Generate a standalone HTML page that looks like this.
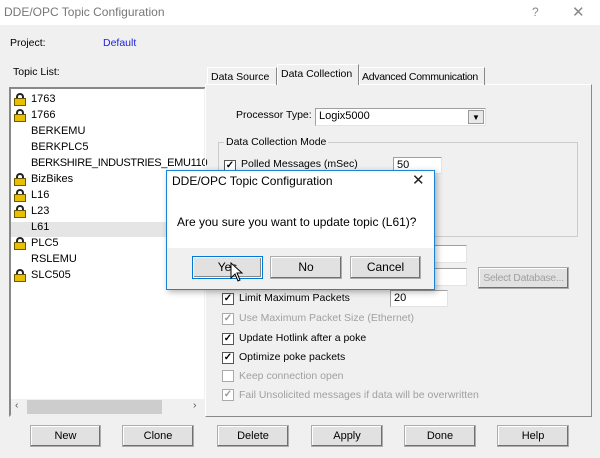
<!DOCTYPE html>
<html><head><style>
*{box-sizing:border-box;margin:0;padding:0}
body{width:600px;height:458px;background:#f0f0f0;font-family:"Liberation Sans",sans-serif;font-size:10.5px;color:#000;position:relative;overflow:hidden}
.a{position:absolute;white-space:nowrap}
.btn{position:absolute;background:#e1e1e1;border:1px solid #adadad;box-shadow:inset -1px -1px 0 #707070,inset 1px 1px 0 #fff;text-align:center;font-size:11px;white-space:nowrap}
.tb{position:absolute;background:#fff;border:1px solid #a0a0a0;border-right-color:#e3e3e3;border-bottom-color:#e3e3e3;font-size:11px;padding:1px 3px}
.cb{position:absolute;width:12px;height:12px;border:1px solid #555;background:#fff;font-size:10px;line-height:10px;text-align:center;font-weight:bold}
.cb.d{border-color:#aaa;color:#999}
.g{color:#a0a0a0}
.lock{position:absolute;left:14px;width:12px;height:13px}
.lock:before{content:"";position:absolute;left:2px;top:0;width:8px;height:7px;border:2px solid #222;border-bottom:none;border-radius:4px 4px 0 0;box-sizing:border-box}
.lock:after{content:"";position:absolute;left:0;top:5px;width:12px;height:8px;background:#e8c000;border:1px solid #6b5800;box-sizing:border-box}
.it{position:absolute;left:31px;font-size:11px;white-space:nowrap}
</style></head><body>
<div class="a" style="left:0;top:0;width:600px;height:25px;background:#fff"></div>
<div class="a" style="left:4px;top:5px;font-size:12px;color:#777">DDE/OPC Topic Configuration</div>
<div class="a" style="left:532px;top:5px;font-size:12px;color:#888">?</div>
<div class="a" style="left:572px;top:3px;font-size:15px;color:#888">✕</div>

<div class="a" style="left:10px;top:37px">Project:</div>
<div class="a" style="left:103px;top:37px;color:#2222dd">Default</div>
<div class="a" style="left:13px;top:66px">Topic List:</div>

<div class="a" style="left:9px;top:87px;width:197px;height:330px;background:#fff;border:2px solid #888;border-right-color:#f0f0f0;border-bottom-color:#f0f0f0"></div>
<div class="a" style="left:11px;top:222px;width:194px;height:15px;background:#e5e5e5"></div>
<div class="lock" style="top:93px"></div><div class="it" style="top:93px">1763</div>
<div class="lock" style="top:109px"></div><div class="it" style="top:109px">1766</div>
<div class="it" style="top:125px">BERKEMU</div>
<div class="it" style="top:141px">BERKPLC5</div>
<div class="it" style="top:157px;letter-spacing:-0.3px">BERKSHIRE_INDUSTRIES_EMU110</div>
<div class="lock" style="top:173px"></div><div class="it" style="top:173px">BizBikes</div>
<div class="lock" style="top:189px"></div><div class="it" style="top:189px">L16</div>
<div class="lock" style="top:205px"></div><div class="it" style="top:205px">L23</div>
<div class="it" style="top:221px">L61</div>
<div class="lock" style="top:237px"></div><div class="it" style="top:237px">PLC5</div>
<div class="it" style="top:253px">RSLEMU</div>
<div class="lock" style="top:269px"></div><div class="it" style="top:269px">SLC505</div>
<div class="a" style="left:11px;top:399px;width:194px;height:16px;background:#f0f0f0"></div>
<div class="a" style="left:27px;top:400px;width:135px;height:14px;background:#cdcdcd"></div>
<div class="a" style="left:15px;top:399px;color:#555">‹</div>
<div class="a" style="left:193px;top:399px;color:#555">›</div>

<div class="a" style="left:205px;top:84px;width:387px;height:333px;border:1px solid #fff;border-right-color:#888;border-bottom-color:#888"></div>
<div class="a" style="left:207px;top:67px;width:70px;height:18px;border:1px solid #fff;border-right-color:#888;border-bottom:none;padding:3px 3px;font-size:10.5px">Data Source</div>
<div class="a" style="left:277px;top:64px;width:82px;height:21px;background:#f0f0f0;border:1px solid #fff;border-right-color:#888;border-bottom:none;padding:3px 3px;font-size:10.5px">Data Collection</div>
<div class="a" style="left:359px;top:67px;width:126px;height:18px;border:1px solid #fff;border-right-color:#888;border-bottom:none;padding:3px 2px;font-size:10.5px;letter-spacing:-0.3px">Advanced Communication</div>

<div class="a" style="left:236px;top:109px">Processor Type:</div>
<div class="tb" style="left:315px;top:108px;width:171px;height:18px">Logix5000</div>
<div class="a" style="left:468px;top:110px;width:16px;height:14px;background:#e8e8e8;border:1px solid #999;font-size:8px;text-align:center;line-height:13px">▼</div>

<div class="a" style="left:218px;top:142px;width:360px;height:95px;border:1px solid #ccc"></div>
<div class="a" style="left:224px;top:136px;background:#f0f0f0;padding:0 2px">Data Collection Mode</div>
<div class="cb" style="left:224px;top:160px">✓</div><div class="a" style="left:241px;top:158px">Polled Messages (mSec)</div>
<div class="tb" style="left:393px;top:157px;width:49px;height:17px">50</div>

<div class="tb" style="left:430px;top:245px;width:37px;height:18px"></div>
<div class="tb" style="left:430px;top:268px;width:37px;height:18px"></div>
<div class="btn g" style="left:478px;top:267px;width:91px;height:22px;line-height:20px;font-size:10.5px;letter-spacing:-0.3px">Select Database...</div>

<div class="cb" style="left:222px;top:293px">✓</div><div class="a" style="left:239px;top:292px">Limit Maximum Packets</div>
<div class="tb" style="left:390px;top:290px;width:58px;height:17px">20</div>
<div class="cb d" style="left:222px;top:313px">✓</div><div class="a g" style="left:239px;top:312px">Use Maximum Packet Size (Ethernet)</div>
<div class="cb" style="left:222px;top:333px">✓</div><div class="a" style="left:239px;top:332px">Update Hotlink after a poke</div>
<div class="cb" style="left:222px;top:352px">✓</div><div class="a" style="left:239px;top:351px">Optimize poke packets</div>
<div class="cb d" style="left:222px;top:370px"></div><div class="a g" style="left:239px;top:370px">Keep connection open</div>
<div class="cb d" style="left:222px;top:389px">✓</div><div class="a g" style="left:239px;top:389px">Fail Unsolicited messages if data will be overwritten</div>

<div class="btn" style="left:30px;top:425px;width:71px;height:22px;line-height:20px">New</div>
<div class="btn" style="left:122px;top:425px;width:72px;height:22px;line-height:20px">Clone</div>
<div class="btn" style="left:217px;top:425px;width:72px;height:22px;line-height:20px">Delete</div>
<div class="btn" style="left:311px;top:425px;width:72px;height:22px;line-height:20px">Apply</div>
<div class="btn" style="left:404px;top:425px;width:72px;height:22px;line-height:20px">Done</div>
<div class="btn" style="left:497px;top:425px;width:72px;height:22px;line-height:20px">Help</div>

<div class="a" style="left:166px;top:170px;width:269px;height:120px;background:#fff;border:1px solid #1883d7;box-shadow:2px 2px 6px rgba(0,0,0,.3)"></div>
<div class="a" style="left:167px;top:248px;width:267px;height:41px;background:#f0f0f0"></div>
<div class="a" style="left:172px;top:174px;font-size:12px">DDE/OPC Topic Configuration</div>
<div class="a" style="left:412px;top:171px;font-size:15px;color:#222">✕</div>
<div class="a" style="left:177px;top:215px;font-size:12px">Are you sure you want to update topic (L61)?</div>
<div class="btn" style="left:192px;top:256px;width:71px;height:23px;line-height:21px;font-size:12px;border:1px solid #0078d7;box-shadow:inset 0 0 0 1px #fff,inset -2px -2px 0 #888">Yes</div>
<div class="btn" style="left:270px;top:256px;width:72px;height:23px;line-height:21px;font-size:12px">No</div>
<div class="btn" style="left:350px;top:256px;width:71px;height:23px;line-height:21px;font-size:12px">Cancel</div>
<svg class="a" style="left:230px;top:262px" width="14" height="20" viewBox="0 0 14 20"><path d="M1 1 L1 16 L5 12 L8 19 L10 18 L7 11 L12 11 Z" fill="#fff" stroke="#000" stroke-width="1"/></svg>
</body></html>
